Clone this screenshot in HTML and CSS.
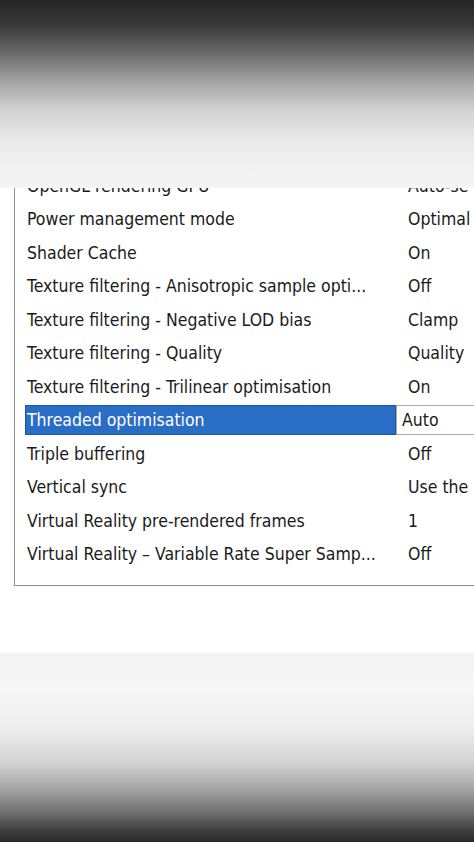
FILE: index.html
```html
<!DOCTYPE html>
<html>
<head>
    <meta charset="utf-8" />
    <title>Settings</title>
    <link rel="stylesheet" href="styles.css">
</head>
<body>
    <section id="screen">
        <div class="shade shade-top"></div>

        <section id="settings">
            <div class="row"><span class="label">OpenGL rendering GPU</span><span class="value">Auto-se</span></div>
            <div class="row"><span class="label">Power management mode</span><span class="value">Optimal</span></div>
            <div class="row"><span class="label">Shader Cache</span><span class="value">On</span></div>
            <div class="row"><span class="label">Texture filtering - Anisotropic sample opti...</span><span class="value">Off</span></div>
            <div class="row"><span class="label">Texture filtering - Negative LOD bias</span><span class="value">Clamp</span></div>
            <div class="row"><span class="label">Texture filtering - Quality</span><span class="value">Quality</span></div>
            <div class="row"><span class="label">Texture filtering - Trilinear optimisation</span><span class="value">On</span></div>
            <div class="row selected"><span class="label">Threaded optimisation</span><span class="value">Auto</span></div>
            <div class="row"><span class="label">Triple buffering</span><span class="value">Off</span></div>
            <div class="row"><span class="label">Vertical sync</span><span class="value">Use the</span></div>
            <div class="row"><span class="label">Virtual Reality pre-rendered frames</span><span class="value">1</span></div>
            <div class="row"><span class="label">Virtual Reality &ndash; Variable Rate Super Samp...</span><span class="value">Off</span></div>
        </section>

        <div class="shade shade-bottom"></div>
    </section>
</body>
</html>
```
FILE: styles.css
```css
html, body {
    margin: 0;
    padding: 0;
    background: #fff;
    overflow: hidden;
}

#screen {
    position: relative;
    width: 474px;
    height: 842px;
    overflow: hidden;
    font-family: "DejaVu Sans Condensed", "DejaVu Sans", sans-serif;
    font-size: 17.5px;
    color: #1a1a1a;
}

#settings {
    width: 640px;
    margin: 160px 0 0 14px;
    padding: 7.75px 0 14px 10px;
    border: 1px solid #8e8e8e;
    border-right: none;
}

.row {
    display: flex;
    align-items: center;
    height: 33.5px;
    white-space: nowrap;
}

    .row .label {
        display: flex;
        align-items: center;
        box-sizing: border-box;
        width: 371px;
        height: 30px;
        padding-left: 2px;
    }

    .row .value {
        display: flex;
        align-items: center;
        box-sizing: border-box;
        height: 30px;
        padding-left: 12px;
        flex-grow: 1;
    }

.selected .label {
    background-color: #2a6dc4;
    border: 1px solid #1b55a5;
    padding-left: 1px;
    color: #fff;
}

.selected .value {
    background-color: #fff;
    border: 1px solid #a9a9a9;
    border-right: none;
    padding-left: 5px;
}

.shade {
    position: absolute;
    left: 0;
    width: 100%;
}

.shade-top {
    top: 0;
    height: 188px;
    background: linear-gradient(to bottom, #262626 0px, #383838 25px, #6e6e6e 55px, #aaaaaa 85px, #d4d4d4 112px, #e9e9e9 140px, #f1f1f1 165px, #f4f4f4 188px);
}

.shade-bottom {
    top: 653px;
    bottom: 0;
    background: linear-gradient(to bottom, #f3f3f3 0px, #f7f7f7 35px, #eeeeee 75px, #d2d2d2 110px, #a6a6a6 135px, #6e6e6e 160px, #3e3e3e 178px, #2a2a2a 189px);
}
```
